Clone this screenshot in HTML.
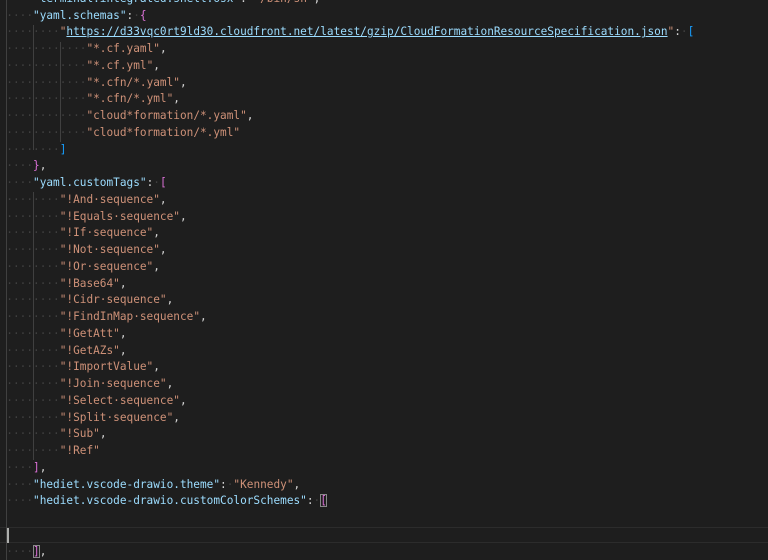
<!DOCTYPE html>
<html><head><meta charset="utf-8"><style>
html,body{margin:0;padding:0;background:#1e1e1e;width:768px;height:560px;overflow:hidden}
#ed{position:absolute;left:0;top:0;width:768px;height:560px;font-family:"DejaVu Sans Mono","Liberation Mono",monospace;font-size:11.1px;}
.l{position:absolute;left:6.3px;height:16.75px;line-height:16.75px;white-space:pre;color:#d4d4d4}
.d{color:#3f3f3f}
.k{color:#9cdcfe}
.s{color:#ce9178}
.u{color:#ce9178}
.u a{color:#9cdcfe;text-decoration:underline;text-decoration-color:#9cdcfe}
.p{color:#da70d6}
.b{color:#179fff}
.bx{outline:1px solid #888;outline-offset:-1px}
.g{position:absolute;width:1px;background:#404040}
</style></head><body><div id="ed">
<div style="position:absolute;left:0;top:527px;width:768px;height:16px;border-top:1px solid #2c2c2c;border-bottom:1px solid #2c2c2c;box-sizing:border-box"></div>
<div style="position:absolute;left:7px;top:528px;width:2px;height:15px;background:#aeafad"></div>
<div class="g" style="left:6px;top:0;height:560px"></div>
<div class="g" style="left:33px;top:25px;height:125px"></div>
<div class="g" style="left:33px;top:192px;height:268px"></div>
<div class="g" style="left:60px;top:42px;height:100px"></div>
<div class="l" style="top:-9.1px"><span class="d">····</span><span class="k">"terminal.integrated.shell.osx"</span>:<span class="d">·</span><span class="s">"/bin/sh"</span>,</div>
<div class="l" style="top:7.65px"><span class="d">····</span><span class="k">"yaml.schemas"</span>:<span class="d">·</span><span class="p">{</span></div>
<div class="l" style="top:24.4px"><span class="d">········</span><span class="u">"<a>https://d33vqc0rt9ld30.cloudfront.net/latest/gzip/CloudFormationResourceSpecification.json</a>"</span>:<span class="d">·</span><span class="b">[</span></div>
<div class="l" style="top:41.15px"><span class="d">············</span><span class="s">"*.cf.yaml"</span>,</div>
<div class="l" style="top:57.9px"><span class="d">············</span><span class="s">"*.cf.yml"</span>,</div>
<div class="l" style="top:74.65px"><span class="d">············</span><span class="s">"*.cfn/*.yaml"</span>,</div>
<div class="l" style="top:91.4px"><span class="d">············</span><span class="s">"*.cfn/*.yml"</span>,</div>
<div class="l" style="top:108.15px"><span class="d">············</span><span class="s">"cloud*formation/*.yaml"</span>,</div>
<div class="l" style="top:124.9px"><span class="d">············</span><span class="s">"cloud*formation/*.yml"</span></div>
<div class="l" style="top:141.65px"><span class="d">········</span><span class="b">]</span></div>
<div class="l" style="top:158.4px"><span class="d">····</span><span class="p">}</span>,</div>
<div class="l" style="top:175.15px"><span class="d">····</span><span class="k">"yaml.customTags"</span>:<span class="d">·</span><span class="p">[</span></div>
<div class="l" style="top:191.9px"><span class="d">········</span><span class="s">"!And·sequence"</span>,</div>
<div class="l" style="top:208.65px"><span class="d">········</span><span class="s">"!Equals·sequence"</span>,</div>
<div class="l" style="top:225.4px"><span class="d">········</span><span class="s">"!If·sequence"</span>,</div>
<div class="l" style="top:242.15px"><span class="d">········</span><span class="s">"!Not·sequence"</span>,</div>
<div class="l" style="top:258.9px"><span class="d">········</span><span class="s">"!Or·sequence"</span>,</div>
<div class="l" style="top:275.65px"><span class="d">········</span><span class="s">"!Base64"</span>,</div>
<div class="l" style="top:292.4px"><span class="d">········</span><span class="s">"!Cidr·sequence"</span>,</div>
<div class="l" style="top:309.15px"><span class="d">········</span><span class="s">"!FindInMap·sequence"</span>,</div>
<div class="l" style="top:325.9px"><span class="d">········</span><span class="s">"!GetAtt"</span>,</div>
<div class="l" style="top:342.65px"><span class="d">········</span><span class="s">"!GetAZs"</span>,</div>
<div class="l" style="top:359.4px"><span class="d">········</span><span class="s">"!ImportValue"</span>,</div>
<div class="l" style="top:376.15px"><span class="d">········</span><span class="s">"!Join·sequence"</span>,</div>
<div class="l" style="top:392.9px"><span class="d">········</span><span class="s">"!Select·sequence"</span>,</div>
<div class="l" style="top:409.65px"><span class="d">········</span><span class="s">"!Split·sequence"</span>,</div>
<div class="l" style="top:426.4px"><span class="d">········</span><span class="s">"!Sub"</span>,</div>
<div class="l" style="top:443.15px"><span class="d">········</span><span class="s">"!Ref"</span></div>
<div class="l" style="top:459.9px"><span class="d">····</span><span class="p">]</span>,</div>
<div class="l" style="top:476.65px"><span class="d">····</span><span class="k">"hediet.vscode-drawio.theme"</span>:<span class="d">·</span><span class="s">"Kennedy"</span>,</div>
<div class="l" style="top:493.4px"><span class="d">····</span><span class="k">"hediet.vscode-drawio.customColorSchemes"</span>:<span class="d">·</span><span class="p bx">[</span></div>
<div class="l" style="top:543.65px"><span class="d">····</span><span class="p bx">]</span>,</div>
</div></body></html>
